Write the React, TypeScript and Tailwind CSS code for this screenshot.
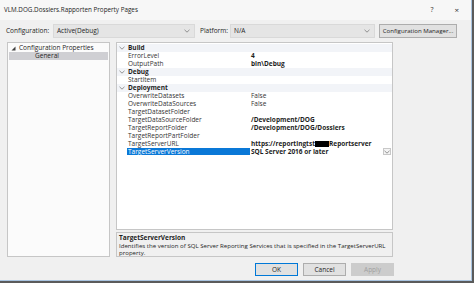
import React from "react";

type Row =
  | { kind: "cat"; label: string }
  | { kind: "prop"; name: string; value?: string; bold?: boolean; selected?: boolean; redact?: boolean };

const rows: Row[] = [
  { kind: "cat", label: "Build" },
  { kind: "prop", name: "ErrorLevel", value: "4", bold: true },
  { kind: "prop", name: "OutputPath", value: "bin\\Debug", bold: true },
  { kind: "cat", label: "Debug" },
  { kind: "prop", name: "StartItem" },
  { kind: "cat", label: "Deployment" },
  { kind: "prop", name: "OverwriteDatasets", value: "False" },
  { kind: "prop", name: "OverwriteDataSources", value: "False" },
  { kind: "prop", name: "TargetDatasetFolder" },
  { kind: "prop", name: "TargetDataSourceFolder", value: "/Development/DOG", bold: true },
  { kind: "prop", name: "TargetReportFolder", value: "/Development/DOG/Dossiers", bold: true },
  { kind: "prop", name: "TargetReportPartFolder" },
  { kind: "prop", name: "TargetServerURL", bold: true, redact: true },
  { kind: "prop", name: "TargetServerVersion", value: "SQL Server 2016 or later", bold: true, selected: true },
];

const Chevron = ({ className = "" }: { className?: string }) => (
  <svg width="6" height="4" viewBox="0 0 6 4" className={className}>
    <polyline points="0.5,0.8 3,3.2 5.5,0.8" fill="none" stroke="#7a7a7a" strokeWidth="0.8" />
  </svg>
);

const Select = ({ value, width }: { value: string; width: string }) => (
  <div className={`${width} h-[14px] bg-[#e5e5e5] border border-[#d9d9d9] flex items-center justify-between pl-[3px] pr-[4px]`}>
    <span>{value}</span>
    <Chevron />
  </div>
);

export default function App() {
  return (
    <div
      className="w-[474px] h-[283px] bg-[#5b5b5b] text-[6.5px] text-[#1e1e1e] overflow-hidden"
      style={{ fontFamily: '"Open Sans", "Noto Sans", sans-serif' }}
    >
      <div className="w-[472px] h-[281px] bg-[#f0f0f0] border-r border-b border-[#a9c4e0] flex flex-col">
        {/* title bar */}
        <div className="h-[20px] flex items-center pl-[4px] bg-[#f7f7f7]">
          <span className="text-[6.3px]">VLM.DOG.Dossiers.Rapporten Property Pages</span>
          <span className="ml-auto text-[7px] text-[#333]">?</span>
          <span className="ml-[21px] mr-[12px] text-[8px] text-[#333]">×</span>
        </div>

        {/* configuration row */}
        <div className="h-[14px] mt-[4px] flex items-center">
          <span className="ml-[6px] w-[47px]">Configuration:</span>
          <Select value="Active(Debug)" width="w-[142px]" />
          <span className="ml-[5px] w-[30px]">Platform:</span>
          <Select value="N/A" width="w-[145px]" />
          <div className="ml-[4px] w-[78px] h-[14px] bg-[#e1e1e1] border border-[#adadad] flex items-center justify-center text-[6.1px]">
            Configuration Manager...
          </div>
        </div>

        {/* main */}
        <div className="flex mt-[4px] h-[215px]">
          <div className="ml-[7px] w-[103px] bg-[#fbfbfb] border border-[#c6c6c6] pt-[1px]">
            <div className="h-[8px] flex items-center pl-[3px]">
              <svg width="5" height="5" viewBox="0 0 5 5">
                <polygon points="4.5,0.5 4.5,4.5 0.5,4.5" fill="#404040" />
              </svg>
              <span className="ml-[3px]">Configuration Properties</span>
            </div>
            <div className="h-[8px] flex items-center pl-[26px] mx-[1px] bg-[#cfcfd3]">General</div>
          </div>

          <div className="ml-[6px] w-[277px] flex flex-col">
            <div className="h-[188px] bg-white border border-[#c6c6c6] pt-[0.5px]">
              {rows.map((r, i) =>
                r.kind === "cat" ? (
                  <div key={i} className="h-[8px] flex items-center bg-[#f2f4f8]">
                    <div className="w-[10px] flex justify-center">
                      <Chevron />
                    </div>
                    <span className="font-bold pl-[1px]">{r.label}</span>
                  </div>
                ) : (
                  <div key={i} className="h-[8px] flex items-center">
                    <div className="w-[10px]" />
                    <div
                      className={`w-[123px] h-[7px] flex items-center pl-[1px] ${
                        r.selected ? "bg-[#0a78d7] text-white" : "text-[#333]"
                      }`}
                    >
                      {r.name}
                    </div>
                    <div className={`ml-[1px] flex-1 flex items-center ${r.bold ? "font-bold" : "text-[#333]"}`}>
                      {r.redact ? (
                        <span className="flex items-center">
                          https://reportingtst
                          <span className="inline-block w-[14px] h-[6px] bg-black" />
                          Reportserver
                        </span>
                      ) : (
                        r.value
                      )}
                    </div>
                    {r.selected && (
                      <div className="w-[8px] h-[7px] mr-[1px] border border-[#c8c8c8] bg-[#f4f4f4] flex items-center justify-center">
                        <Chevron />
                      </div>
                    )}
                  </div>
                )
              )}
            </div>
            <div className="mt-[2px] h-[25px] bg-[#f0f0f0] border border-[#c6c6c6] px-[2px] pt-[1px] leading-[7.5px]">
              <div className="font-bold">TargetServerVersion</div>
              <div className="text-[6.1px]">
                Identifies the version of SQL Server Reporting Services that is specified in the TargetServerURL
                property.
              </div>
            </div>
          </div>
        </div>

        {/* buttons */}
        <div className="flex mt-[6px] ml-[255px] gap-[5px]">
          <div className="w-[43px] h-[13px] bg-[#e1e1e1] border border-[#0078d7] flex items-center justify-center">
            OK
          </div>
          <div className="w-[43px] h-[13px] bg-[#e1e1e1] border border-[#adadad] flex items-center justify-center">
            Cancel
          </div>
          <div className="w-[43px] h-[13px] bg-[#cccccc] border border-[#cccccc] text-[#a0a0a0] flex items-center justify-center">
            Apply
          </div>
        </div>
      </div>
    </div>
  );
}
